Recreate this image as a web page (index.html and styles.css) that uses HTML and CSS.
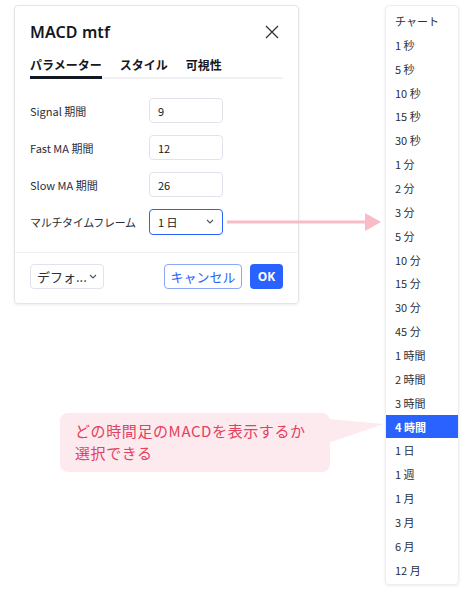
FILE: index.html
```html
<!DOCTYPE html>
<html lang="ja">
<head>
<meta charset="utf-8">
<link rel="stylesheet" href="styles.css">
</head>
<body>
<div class="canvas">
  <div class="dialog">
    <div class="head">
      <div class="title">MACD mtf</div>
      <svg class="close" width="14" height="14" viewBox="0 0 14 14"><path d="M1 1L13 13M13 1L1 13" stroke="#2a2e39" stroke-width="1.2" fill="none"/></svg>
    </div>
    <div class="tabs">
      <div class="tab active">パラメーター</div>
      <div class="tab">スタイル</div>
      <div class="tab">可視性</div>
    </div>
    <div class="rows">
      <div class="row"><div class="label">Signal 期間</div><div class="input">9</div></div>
      <div class="row"><div class="label">Fast MA 期間</div><div class="input">12</div></div>
      <div class="row"><div class="label">Slow MA 期間</div><div class="input">26</div></div>
      <div class="row"><div class="label big">マルチタイムフレーム</div><div class="input select">1 日<svg width="8" height="5" viewBox="0 0 8 5"><path d="M1 1L4 4L7 1" stroke="#50535e" stroke-width="1.1" fill="none"/></svg></div></div>
    </div>
    <div class="footer">
      <div class="preset">デフォ...<svg width="8" height="5" viewBox="0 0 8 5"><path d="M1 1L4 4L7 1" stroke="#50535e" stroke-width="1.1" fill="none"/></svg></div>
      <div class="btns">
        <div class="btn outline">キャンセル</div>
        <div class="btn primary">OK</div>
      </div>
    </div>
  </div>
  <div class="list">
    <div class="item">チャート</div>
    <div class="item">1 秒</div>
    <div class="item">5 秒</div>
    <div class="item">10 秒</div>
    <div class="item">15 秒</div>
    <div class="item">30 秒</div>
    <div class="item">1 分</div>
    <div class="item">2 分</div>
    <div class="item">3 分</div>
    <div class="item">5 分</div>
    <div class="item">10 分</div>
    <div class="item">15 分</div>
    <div class="item">30 分</div>
    <div class="item">45 分</div>
    <div class="item">1 時間</div>
    <div class="item">2 時間</div>
    <div class="item">3 時間</div>
    <div class="item sel">4 時間</div>
    <div class="item">1 日</div>
    <div class="item">1 週</div>
    <div class="item">1 月</div>
    <div class="item">3 月</div>
    <div class="item">6 月</div>
    <div class="item">12 月</div>
  </div>
  <svg class="arrow" width="160" height="24" viewBox="0 0 160 24"><path d="M0 12H140" stroke="#f8bcc6" stroke-width="3"/><path d="M138 3L154 12L138 21Z" fill="#f8bcc6"/></svg>
  <svg class="tail" width="60" height="40" viewBox="0 0 60 40"><path d="M0 8L56 13L0 32Z" fill="#fdeaee"/></svg>
  <div class="callout"><div>どの時間足のMACDを表示するか</div><div>選択できる</div></div>
</div>
</body>
</html>
```
FILE: styles.css
```css
* { box-sizing: border-box; }
body {
  margin: 0;
  background: #fff;
  font-family: "Noto Sans", "Noto Sans CJK JP", sans-serif;
  color: #131722;
}
.canvas {
  position: relative;
  width: 474px;
  height: 591px;
  display: flex;
  align-items: flex-start;
  padding: 5px 0 0 14px;
  gap: 86px;
}
.dialog {
  width: 285px;
  height: 299px;
  border: 1px solid #e4e5e8;
  border-radius: 4px;
  box-shadow: 0 1px 3px rgba(0,0,0,0.08);
  padding: 15px 15px 0 15px;
  display: flex;
  flex-direction: column;
}
.head {
  display: flex;
  justify-content: space-between;
  align-items: center;
  height: 22px;
}
.title {
  font-size: 16px;
  font-weight: 600;
  letter-spacing: 0.1px;
}
.close { margin-right: 4px; }
.tabs {
  margin-top: 11px;
  display: flex;
  gap: 18px;
  border-bottom: 2px solid #f0f1f4;
  height: 25px;
}
.tab {
  font-size: 12px;
  font-weight: 700;
  line-height: 22px;
  font-family: "Noto Sans CJK JP", sans-serif;
}
.tab.active {
  border-bottom: 3px solid #131722;
  margin-bottom: -2px;
}
.rows {
  margin-top: 19px;
  display: flex;
  flex-direction: column;
  gap: 12px;
}
.row {
  display: flex;
  align-items: center;
  height: 25px;
}
.label {
  width: 119px;
  font-size: 11px;
  color: #2a2e39;
  font-family: "Noto Sans CJK JP", sans-serif;
}
.label.big { font-size: 11px; letter-spacing: -0.3px; }
.input {
  width: 74px;
  height: 25px;
  border: 1px solid #e0e3eb;
  border-radius: 4px;
  padding-left: 8px;
  font-size: 11px;
  display: flex;
  align-items: center;
  font-family: "Noto Sans CJK JP", sans-serif;
}
.row:last-child .input { height: 26px; }
.input.select {
  border: 1.5px solid #2962ff;
  justify-content: space-between;
  padding-right: 8px;
}
.footer {
  margin-top: 18px;
  border-top: 1px solid #f0f1f4;
  margin-left: -15px;
  margin-right: -15px;
  padding: 11px 15px 0 15px;
  display: flex;
  justify-content: space-between;
  align-items: center;
}
.preset {
  width: 74px;
  height: 25px;
  border: 1px solid #e0e3eb;
  border-radius: 4px;
  font-size: 13px;
  display: flex;
  align-items: center;
  justify-content: space-between;
  padding: 0 6px 0 6px;
  color: #2a2e39;
  font-family: "Noto Sans CJK JP", sans-serif;
}
.btns { display: flex; gap: 8px; }
.btn {
  height: 25px;
  border-radius: 4px;
  display: flex;
  align-items: center;
  justify-content: center;
  font-size: 13px;
  font-family: "Noto Sans CJK JP", sans-serif;
}
.btn.outline {
  width: 78px;
  border: 1px solid #8aa8f5;
  color: #2962ff;
}
.btn.primary {
  width: 33px;
  background: #2962ff;
  color: #fff;
  font-weight: 700;
  font-size: 12px;
  font-family: "Noto Sans", sans-serif;
}
.list {
  width: 74px;
  height: 580px;
  border: 1px solid #eceef1;
  border-radius: 4px;
  box-shadow: 0 1px 3px rgba(0,0,0,0.08);
  padding-top: 3px;
  display: flex;
  flex-direction: column;
}
.item {
  height: 23.87px;
  flex: none;
  display: flex;
  align-items: center;
  padding-left: 9px;
  font-size: 11px;
  color: #2a2e39;
  font-family: "Noto Sans CJK JP", sans-serif;
}
.item.sel {
  background: #2962ff;
  color: #fff;
  font-weight: 700;
}
.arrow {
  position: absolute;
  left: 227px;
  top: 210px;
}
.tail {
  position: absolute;
  left: 328px;
  top: 411px;
}
.callout {
  position: absolute;
  left: 60px;
  top: 413px;
  width: 270px;
  height: 59px;
  background: #fdeaee;
  border-radius: 8px;
  padding: 7px 0 0 15px;
  color: #e2415f;
  font-size: 15px;
  letter-spacing: 0.6px;
  line-height: 22px;
  font-family: "Noto Sans CJK JP", sans-serif;
}
```
